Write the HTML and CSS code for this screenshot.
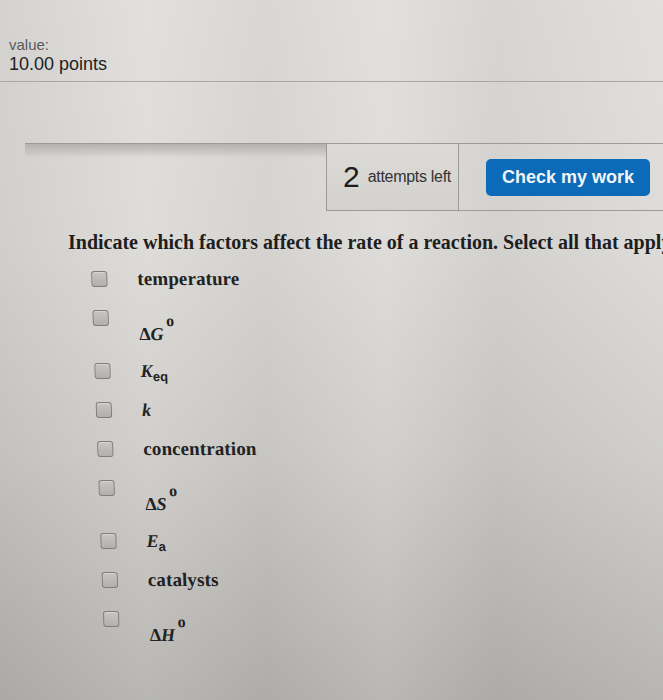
FILE: index.html
```html
<!DOCTYPE html>
<html lang="en">
<head>
    <meta charset="UTF-8">
    <meta name="viewport" content="width=device-width, initial-scale=1.0">
    <title>Question 4</title>
    <link rel="stylesheet" href="styles.css">
</head>
<body>
    <div class="value-header">
        <div class="value-label">value:</div>
        <div class="value-points">10.00 points</div>
    </div>

    <div class="toolbar">
        <div class="toolbar-fill"></div>
        <div class="attempts">
            <span class="attempts-count">2</span>
            <span class="attempts-text">attempts left</span>
        </div>
        <div class="check-cell">
            <button class="check-button">Check my work</button>
        </div>
    </div>

    <div class="question">
        <p class="prompt">Indicate which factors affect the rate of a reaction. Select all that apply.</p>

        <ul class="options">
            <li class="option">
                <span class="box"></span>
                <span class="label">temperature</span>
            </li>
            <li class="option option-sup">
                <span class="box"></span>
                <span class="label math"><span class="up">Δ</span>G<sup>o</sup></span>
            </li>
            <li class="option">
                <span class="box"></span>
                <span class="label math">K<sub>eq</sub></span>
            </li>
            <li class="option">
                <span class="box"></span>
                <span class="label math">k</span>
            </li>
            <li class="option">
                <span class="box"></span>
                <span class="label">concentration</span>
            </li>
            <li class="option option-sup">
                <span class="box"></span>
                <span class="label math"><span class="up">Δ</span>S<sup>o</sup></span>
            </li>
            <li class="option">
                <span class="box"></span>
                <span class="label math">E<sub>a</sub></span>
            </li>
            <li class="option">
                <span class="box"></span>
                <span class="label">catalysts</span>
            </li>
            <li class="option option-sup">
                <span class="box"></span>
                <span class="label math"><span class="up">Δ</span>H<sup>o</sup></span>
            </li>
        </ul>
    </div>
</body>
</html>
```

FILE: styles.css
```css
* {
    margin: 0;
    padding: 0;
    box-sizing: border-box;
}

html {
    min-height: 100%;
    background: linear-gradient(180deg, #dfdedc 0%, #dbdad7 35%, #cdccc8 65%, #b3b2ae 100%);
}

body {
    min-height: 700px;
    overflow: hidden;
    font-family: "Liberation Sans", Arial, sans-serif;
    color: #222;
    background: linear-gradient(90deg,
        rgba(0, 0, 0, 0.05) 0%,
        rgba(255, 255, 255, 0.06) 22%,
        rgba(0, 0, 0, 0.03) 40%,
        rgba(255, 255, 255, 0.07) 58%,
        rgba(0, 0, 0, 0.04) 75%,
        rgba(255, 255, 255, 0.05) 100%);
}

/* value header */
.value-header {
    padding: 36px 9px 6px;
    border-bottom: 1px solid #a9a8a5;
}

.value-label {
    font-size: 15px;
    color: #5a5a58;
    line-height: 17px;
}

.value-points {
    font-size: 18px;
    line-height: 22px;
    color: #222;
}

/* attempts / check bar */
.toolbar {
    display: flex;
    margin: 61px 0 0 25px;
    border-top: 1px solid #9c9b98;
}

.toolbar-fill {
    flex: 1;
    height: 14px;
    background: linear-gradient(180deg, #b3b2ae 0%, rgba(200, 199, 196, 0) 100%);
}

.attempts {
    width: 132px;
    height: 67px;
    display: flex;
    align-items: center;
    gap: 8px;
    padding-left: 16px;
    border-left: 1px solid #9c9b98;
    border-bottom: 1px solid #9c9b98;
    background: linear-gradient(180deg, #dcdbd8, #d2d1ce);
}

.attempts-count {
    font-size: 30px;
    color: #1c1c1c;
}

.attempts-text {
    font-size: 16px;
    color: #333;
    letter-spacing: -0.3px;
}

.check-cell {
    width: 205px;
    height: 67px;
    display: flex;
    align-items: center;
    padding-left: 27px;
    border-left: 1px solid #9c9b98;
    border-bottom: 1px solid #9c9b98;
}

.check-button {
    width: 164px;
    height: 37px;
    border: none;
    border-radius: 5px;
    background: #0b6bb9;
    color: #f2f4f6;
    font-family: "Liberation Sans", Arial, sans-serif;
    font-size: 18px;
    font-weight: bold;
    cursor: pointer;
}

/* question body */
.question {
    padding: 20px 0 0 68px;
}

.prompt {
    font-family: "Liberation Serif", "Times New Roman", serif;
    font-weight: bold;
    font-size: 20px;
    line-height: 22px;
    white-space: nowrap;
    color: #1e1e1e;
}

.options {
    list-style: none;
    margin-top: 16px;
    padding-left: 23px;
    transform: skewX(2deg);
    transform-origin: top left;
}

.option {
    display: flex;
    align-items: flex-start;
    gap: 30px;
    margin-bottom: 19px;
}

.option-sup {
    margin-bottom: 17px;
}

.box {
    flex: none;
    width: 16px;
    height: 16px;
    margin-top: 2px;
    border: 1px solid #7f7e7a;
    border-radius: 3px;
    background: linear-gradient(180deg, #c6c5c1, #b1b0ac);
    box-shadow: inset 0 1px 1px rgba(255, 255, 255, 0.3);
}

.label {
    font-family: "Liberation Serif", "Times New Roman", serif;
    font-weight: bold;
    font-size: 19px;
    line-height: 20px;
    letter-spacing: 0.1px;
    color: #222;
}

.math {
    font-size: 18px;
    font-style: italic;
    letter-spacing: 0;
}

.math .up {
    font-style: normal;
}

.math sub {
    font-family: "Liberation Sans", Arial, sans-serif;
    font-style: normal;
    font-size: 13px;
    vertical-align: -4px;
    line-height: 0;
}

.option-sup .label {
    padding-top: 16px;
}

.math sup {
    position: relative;
    top: -14px;
    margin-left: 3px;
    font-style: normal;
    font-size: 16px;
    vertical-align: baseline;
    line-height: 0;
}
```
